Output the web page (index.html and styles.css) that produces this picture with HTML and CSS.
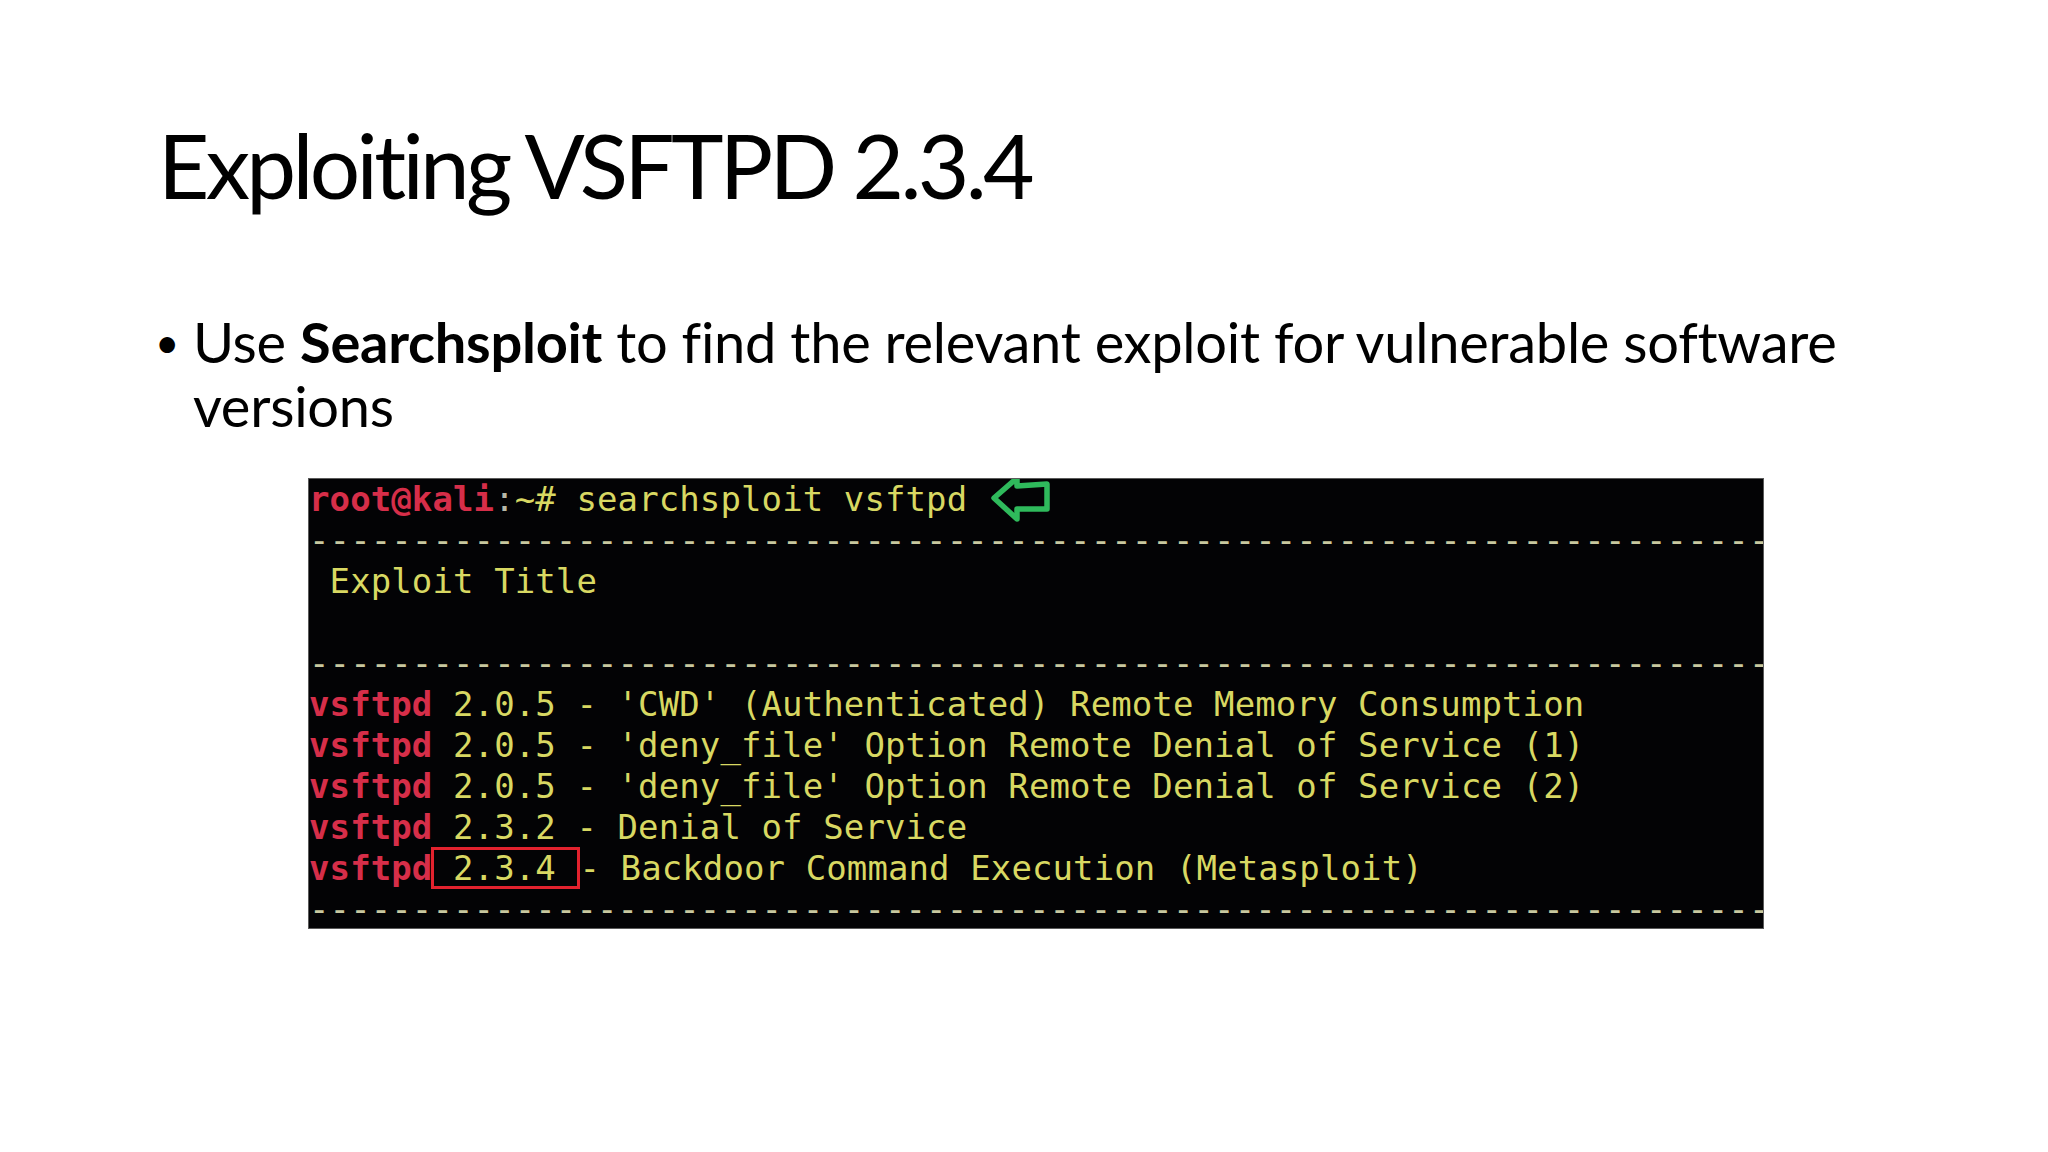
FILE: index.html
```html
<!DOCTYPE html>
<html lang="en">
<head>
<meta charset="utf-8">
<title>Exploiting VSFTPD 2.3.4</title>
<link rel="stylesheet" href="styles.css">
</head>
<body>
<main class="slide">
  <h1 class="title">Exploiting VSFTPD 2.3.4</h1>
  <ul class="bullets">
    <li class="bullet"><span class="dot">•</span><span class="btext">Use <b>Searchsploit</b> to find the relevant exploit for vulnerable software versions</span></li>
  </ul>
  <div class="term">
    <div class="line"><span class="red">root@kali</span><span class="gray">:</span><span class="yel">~# searchsploit vsftpd </span><svg class="arrow" width="62" height="48" viewBox="0 0 62 48"><path d="M4 23 L27 3 L27 11 L57 9 L57 34 L27 34 L27 44 Z" fill="none" stroke="#2fba5c" stroke-width="5.5" stroke-linejoin="round"/></svg></div>
    <div class="line dash">-----------------------------------------------------------------------</div>
    <div class="line yel"> Exploit Title</div>
    <div class="line"> </div>
    <div class="line dash">-----------------------------------------------------------------------</div>
    <div class="line"><span class="red">vsftpd</span><span class="yel"> 2.0.5 - 'CWD' (Authenticated) Remote Memory Consumption</span></div>
    <div class="line"><span class="red">vsftpd</span><span class="yel"> 2.0.5 - 'deny_file' Option Remote Denial of Service (1)</span></div>
    <div class="line"><span class="red">vsftpd</span><span class="yel"> 2.0.5 - 'deny_file' Option Remote Denial of Service (2)</span></div>
    <div class="line"><span class="red">vsftpd</span><span class="yel"> 2.3.2 - Denial of Service</span></div>
    <div class="line"><span class="red">vsftpd</span><span class="yel"><span class="hl"> 2.3.4 </span>- Backdoor Command Execution (Metasploit)</span></div>
    <div class="line dash">-----------------------------------------------------------------------</div>
  </div>
</main>
</body>
</html>
```

FILE: styles.css
```css
html, body {
  margin: 0;
  padding: 0;
  background: #ffffff;
}
.slide {
  width: 2048px;
  height: 1152px;
  box-sizing: border-box;
  padding: 115px 0 0 158px;
  overflow: hidden;
  font-family: Lato, "Open Sans", sans-serif;
  color: #000;
}
.title {
  margin: 0;
  font-size: 89px;
  line-height: 100px;
  font-weight: 400;
  letter-spacing: -3.7px;
}
.bullets {
  list-style: none;
  margin: 95px 0 0 0;
  padding: 0;
}
.bullet {
  display: flex;
  font-size: 56px;
  line-height: 64px;
  letter-spacing: -0.25px;
}
.dot {
  width: 38px;
  flex: none;
  font-size: 42px;
  letter-spacing: 0;
  margin-left: -3px;
}
.btext {
  width: 1720px;
}
.btext b {
  font-weight: 700;
}
.term {
  margin: 40px 0 0 150px;
  width: 1456px;
  height: 451px;
  box-sizing: border-box;
  background: #030305;
  border: 1px solid #5a5a5a;
  overflow: hidden;
  font-family: "DejaVu Sans Mono", "Liberation Mono", monospace;
  font-size: 34px;
  letter-spacing: 0.1px;
}
.line {
  height: 41px;
  line-height: 41px;
  white-space: pre;
  display: flex;
  align-items: center;
}
.red {
  color: #e2314d;
  font-weight: 700;
  opacity: 0.95;
}
.yel { color: #d8d862; }
.gray { color: #b8b8a8; }
.dash { color: #c8c8a0; }
.arrow {
  display: block;
  margin-left: 2px;
  margin-top: -2px;
}
.hl {
  outline: 3.5px solid #e3222e;
  outline-offset: -2px;
  padding-right: 3px;
}
```
